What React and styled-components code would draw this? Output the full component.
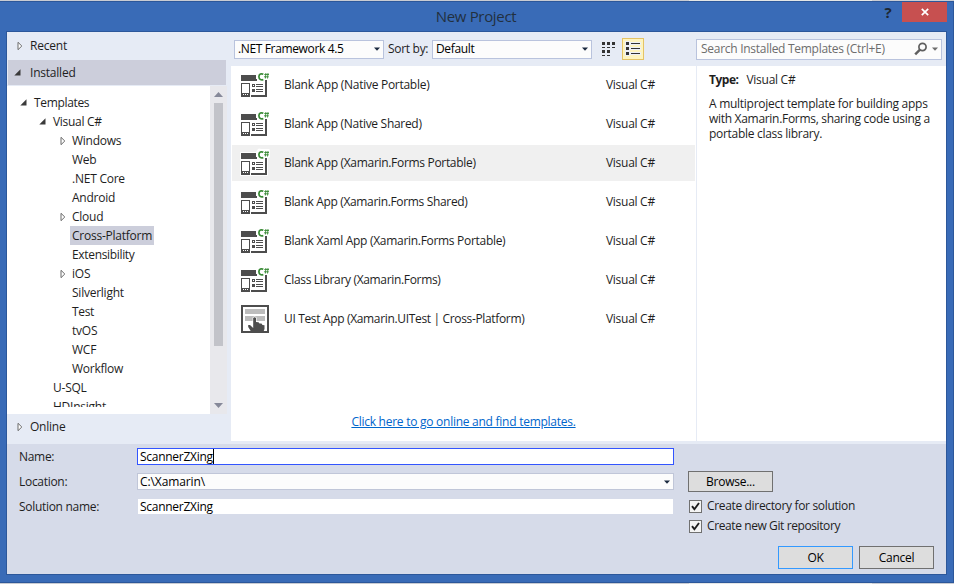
import React from 'react';
import styled, { createGlobalStyle, css } from 'styled-components';

const GlobalStyle = createGlobalStyle`
  *, *::before, *::after { box-sizing: border-box; }
  html, body { margin: 0; padding: 0; overflow: hidden; }
  body { font-family: "Open Sans", "Noto Sans", sans-serif; font-size: 12px; line-height: 16px; color: #1e1e1e; }
`;

const Backdrop = styled.div`
  width: 954px;
  height: 584px;
  padding: 1px 0 1px;
  background: linear-gradient(90deg, #c9ccd3 0 689px, #e4e6e6 689px 872px, #c9ccd3 872px);
  overflow: hidden;
`;

const Dialog = styled.div`
  height: 582px;
  background: #396bb7;
  border: 1px solid #2c579a;
  border-left: 0;
  padding: 0 6px 7px 6px;
  display: flex;
  flex-direction: column;
`;

const TitleBar = styled.header`
  height: 29px;
  display: flex;
  align-items: flex-start;
  color: #22303f;
`;
const Title = styled.h1`
  flex: 1;
  margin: 0;
  padding: 3px 0 0 72px;
  text-align: center;
  font-size: 15px;
  line-height: 22px;
  font-weight: 400;
  letter-spacing: -0.33px;
`;
const HelpButton = styled.span`
  width: 28px;
  line-height: 20px;
  font-size: 15px;
  font-weight: 700;
  text-align: center;
  color: #1d2733;
`;
const CloseButton = styled.button`
  width: 45px;
  height: 20px;
  border: 0;
  padding: 0;
  background: #c75050;
  display: flex;
  align-items: center;
  justify-content: center;
`;

const Client = styled.main`
  flex: 1;
  border: 1px solid #2c579a;
  display: flex;
  flex-direction: column;
  background: #d6dbe9;
`;
const Upper = styled.section`
  height: 412px;
  display: flex;
  background: #e6ebf5;
`;

const Sidebar = styled.nav`
  width: 224px;
  display: flex;
  flex-direction: column;
`;
const Group = styled.div`
  display: flex;
  align-items: center;
  height: ${(p) => p.$h}px;
  margin: 0 5px 0 1px;
  padding-left: ${(p) => (p.$open ? 6 : 9)}px;
  background: ${(p) => (p.$open ? '#cccedb' : 'transparent')};
  letter-spacing: -0.22px;
  > svg { margin-right: ${(p) => (p.$open ? 9 : 7)}px; }
`;
const TreePane = styled.div`
  height: 328px;
  margin-top: 1px;
  display: flex;
`;
const Tree = styled.div`
  width: 203px;
  height: 321px;
  padding-top: 7px;
  overflow: hidden;
  background: #fff;
  box-shadow: 0 7px 0 #fff;
`;
const TreeItem = styled.div`
  height: 19px;
  display: flex;
  align-items: center;
  padding-left: ${(p) => 11 + p.$level * 19}px;
`;
const Twisty = styled.span`
  width: 14px;
  height: 10px;
  padding-left: ${(p) => (p.$state === 'open' ? 2 : 4)}px;
  display: flex;
  align-items: center;
`;
const TreeLabel = styled.span`
  height: 19px;
  padding: 0 2px;
  line-height: 19px;
  white-space: nowrap;
  letter-spacing: ${(p) => p.$ls}px;
  background: ${(p) => (p.$selected ? '#cccedb' : 'transparent')};
`;
const ScrollBar = styled.div`
  width: 17px;
  background: #e8e8ec;
  display: flex;
  flex-direction: column;
  align-items: center;
`;
const ScrollArrow = styled.span`
  height: 17px;
  display: flex;
  align-items: center;
`;
const Track = styled.div`
  flex: 1;
  width: 9px;
`;
const Thumb = styled.div`
  height: 243px;
  background: #c2c3c9;
`;

const Workspace = styled.div`
  flex: 1;
  display: flex;
  flex-direction: column;
`;
const Toolbar = styled.div`
  height: 34px;
  padding: 0 4px 0 3px;
  display: flex;
  align-items: center;
`;
const Select = styled.div`
  width: ${(p) => p.$w}px;
  height: 19px;
  padding: 0 3px 0 3px;
  border: 1px solid #b9c3dd;
  background: #fcfcfc;
  display: flex;
  align-items: center;
  justify-content: space-between;
  letter-spacing: ${(p) => p.$ls}px;
  color: #000;
`;
const SortLabel = styled.span`
  width: 48px;
  padding-left: 4px;
  letter-spacing: -0.3px;
  white-space: nowrap;
`;
const ViewButton = styled.button`
  width: 22px;
  height: 22px;
  padding: 0;
  margin-left: ${(p) => (p.$active ? 3 : 5)}px;
  border: 1px solid ${(p) => (p.$active ? '#e5c365' : 'transparent')};
  background: ${(p) => (p.$active ? '#fdf4bf' : 'transparent')};
`;
const SearchBox = styled.div`
  width: 246px;
  height: 21px;
  margin-left: auto;
  padding: 0 3px 0 4px;
  border: 1px solid #b9c3dd;
  background: #fcfcfc;
  display: flex;
  align-items: center;
  gap: 4px;
  color: #6d6d6d;
`;
const Placeholder = styled.span`
  flex: 1;
  letter-spacing: -0.28px;
  white-space: nowrap;
`;

const Panes = styled.div`
  height: 375px;
  display: flex;
  background: #fff;
`;
const TemplatePane = styled.div`
  width: 465px;
  padding: 1px 1px 0;
  display: flex;
  flex-direction: column;
`;
const TemplateRow = styled.div`
  height: 36px;
  margin-bottom: 3px;
  display: grid;
  grid-template-columns: 52px 322px 1fr;
  align-items: center;
  white-space: nowrap;
  background: ${(p) => (p.$selected ? '#f0f0f0' : 'transparent')};
`;
const IconCell = styled.span`
  height: 36px;
  padding: 3px 0 0 8px;
`;
const RowText = styled.span`
  letter-spacing: ${(p) => p.$ls}px;
`;
const OnlineLink = styled.a`
  margin: 74px 0 0;
  text-align: center;
  color: #0066cc;
  text-decoration: underline;
  letter-spacing: -0.26px;
`;
const Details = styled.aside`
  flex: 1;
  border-left: 1px solid #e6ebf5;
  padding: 6px 0 0 12px;
`;
const TypeLine = styled.div`
  display: flex;
  gap: 8px;
  letter-spacing: -0.28px;
  b { letter-spacing: -0.48px; }
`;
const DescLine = styled.div`
  line-height: 15px;
  white-space: nowrap;
  letter-spacing: ${(p) => p.$ls}px;
`;
const Description = styled.div`
  margin-top: 8px;
`;

const Form = styled.section`
  flex: 1;
  display: grid;
  grid-template-columns: 667px 1fr;
`;
const Fields = styled.div`
  padding: 0 0 0 12px;
`;
const FieldRow = styled.label`
  height: 25px;
  display: grid;
  grid-template-columns: 118px 537px;
  align-items: center;
  letter-spacing: -0.3px;
`;
const inputBox = css`
  height: 17px;
  border: 1px solid ${(p) => (p.$focused ? '#3355ff' : '#d6dbe9')};
  background: #fff;
  padding: 0 2px;
  display: flex;
  align-items: center;
  color: #000;
`;
const Input = styled.div`
  ${inputBox}
  letter-spacing: -0.28px;
`;
const ComboInput = styled.div`
  ${inputBox}
  border-color: #c0c6d8;
  background: #fcfcfc;
  padding-right: 3px;
  justify-content: space-between;
  letter-spacing: -0.1px;
`;
const Caret = styled.span`
  width: 1px;
  height: 15px;
  background: #000;
`;
const Actions = styled.div`
  padding: 27px 12px 0 14px;
  display: flex;
  flex-direction: column;
`;
const Button = styled.button`
  width: ${(p) => p.$w}px;
  height: ${(p) => p.$h}px;
  padding: 0;
  border: 1px solid ${(p) => (p.$primary ? '#3399ff' : '#707070')};
  background: #dddddd;
  color: #000;
  font: inherit;
  letter-spacing: -0.25px;
`;
const CheckRow = styled.label`
  height: 20px;
  padding-left: 1px;
  display: flex;
  align-items: center;
  gap: 5px;
  white-space: nowrap;
  letter-spacing: ${(p) => p.$ls}px;
`;
const CheckBox = styled.span`
  width: 13px;
  height: 13px;
  border: 1px solid #707070;
  background: #f4f4f4;
  display: flex;
`;
const Checks = styled.div`
  margin-top: 4px;
`;
const Footer = styled.div`
  margin-top: 10px;
  display: flex;
  justify-content: flex-end;
  gap: 6px;
`;

const Closed = () => (
  <svg width="6" height="10" viewBox="0 0 6 10"><path d="M1 1.3L4.8 5L1 8.7Z" fill="#fff" stroke="#6a6a6a" /></svg>
);
const Opened = () => (
  <svg width="7" height="7" viewBox="0 0 7 7"><path d="M6.5 .3V6.5H.3Z" fill="#3a3a3a" /></svg>
);
const Drop = ({ color = '#1b293e' }) => (
  <svg width="6" height="4" viewBox="0 0 6 4"><path d="M0 .5H6L3 3.7Z" fill={color} /></svg>
);
const ScrollTriangle = ({ down }) => (
  <svg width="9" height="5" viewBox="0 0 9 5"><path d={down ? 'M0 0H9L4.5 5Z' : 'M0 5H9L4.5 0Z'} fill="#868999" /></svg>
);

const AppIcon = ({ halo }) => (
  <svg width="30" height="28" viewBox="0 0 30 28">
    {halo && <path d="M1 4H16L18 1Q19 0 21 1H29Q30.500 2 30 4V9L28 10.500V27Q28 28 27 28H1Q0 28 0 27V5Q0 4 1 4Z" fill="#fff" />}
    <g shapeRendering="crispEdges">
      <path d="M1 5H16V9H17V11H1Z" fill="#4d4d4d" />
      <path d="M25 10H27V27H11V25H25Z" fill="#4d4d4d" />
      <path d="M1 13H10V27H1Z" fill="#4d4d4d" />
      <path d="M2 14H9V23H2Z" fill="#fff" />
      <path d="M3 24H4V25H3ZM5 24H6V25H5ZM7 24H8V25H7Z" fill="#fff" />
      <path d="M12 14H15V17H12ZM12 19H15V22H12ZM16 14H23V15H16ZM16 16H23V17H16ZM16 19H23V20H16ZM16 21H23V22H16Z" fill="#4d4d4d" />
      <path d="M13 15H14V16H13Z" fill="#fff" />
    </g>
    <path d="M23.300 4.200C21.400 3.200 18.900 4.100 18.900 6.800S21.400 10.400 23.300 9.400" fill="none" stroke="#388a34" strokeWidth="1.7" />
    <path d="M24.300 4.500H29M24 6.800H28.700M25.900 3L25.400 8.500M28 3L27.500 8.500" fill="none" stroke="#388a34" strokeWidth=".9" />
  </svg>
);

const TestIcon = () => (
  <svg width="30" height="30" viewBox="0 0 30 30">
    <path d="M1 1H29V29H1Z" fill="#4d4d4d" />
    <path d="M3 3H27V27H3Z" fill="#fff" />
    <path d="M5 5H25V10H5ZM5 12H25V17H5Z" fill="#bdbdbd" />
    <path d="M11 27.500L8.200 23V21H10L13.200 24V14Q14.600 12.400 16 14V18L18.500 18.200L19.500 19.500L21.500 19.500L22.500 21L24.500 21.300V25L23.500 27.500Z" fill="#4d4d4d" stroke="#fff" strokeWidth="1.200" paintOrder="stroke" />
    <path d="M9 27H26V29H9Z" fill="#4d4d4d" />
  </svg>
);

const SmallIcons = () => (
  <svg width="20" height="20" viewBox="0 0 20 20" shapeRendering="crispEdges">
    <path d="M4 3H7V6H4ZM9 3H12V6H9ZM14 3H17V6H14ZM4 8H7V9H4ZM9 8H12V9H9ZM14 8H17V9H14ZM4 11H7V14H4ZM9 11H12V14H9ZM4 16H7V17H4ZM9 16H12V17H9Z" fill="#333" />
  </svg>
);
const ListIcon = () => (
  <svg width="20" height="20" viewBox="0 0 20 20" shapeRendering="crispEdges">
    <path d="M2 2H7V17H2ZM7 3H18V6H7ZM7 8H18V11H7ZM7 13H18V16H7Z" fill="#edf0f7" />
    <path d="M3 3H6V6H3ZM3 8H6V11H3ZM3 13H6V16H3ZM8 4H17V5H8ZM8 9H17V10H8ZM8 14H17V15H8Z" fill="#333" />
  </svg>
);
const SearchIcon = () => (
  <svg width="14" height="14" viewBox="0 0 14 14" fill="none" stroke="#5f5f5f">
    <circle cx="8.5" cy="5" r="3.6" strokeWidth="1.7" /><path d="M6 7.600L1.200 12.400" strokeWidth="2.4" />
  </svg>
);
const CheckMark = () => (
  <svg width="11" height="11" viewBox="0 0 11 11"><path d="M2 5.200L4.400 8.200L9 2" fill="none" stroke="#1e1e1e" strokeWidth="1.9" /></svg>
);
const CloseIcon = () => (
  <svg width="8" height="8" viewBox="0 0 8 8"><path d="M.8 .8L7.200 7.200M7.200 .8L.8 7.200" stroke="#fff" strokeWidth="1.7" /></svg>
);

const tree = [
  ['Templates', 0, 'open', -0.33], ['Visual C#', 1, 'open', -0.3], ['Windows', 2, 'closed', -0.25],
  ['Web', 2], ['.NET Core', 2], ['Android', 2], ['Cloud', 2, 'closed'], ['Cross-Platform', 2],
  ['Extensibility', 2, null, -0.33], ['iOS', 2, 'closed'], ['Silverlight', 2], ['Test', 2, null, -0.35], ['tvOS', 2],
  ['WCF', 2], ['Workflow', 2, null, -0.26], ['U-SQL', 1], ['HDInsight', 1],
];

const templates = [
  ['Blank App (Native Portable)', -0.28],
  ['Blank App (Native Shared)', -0.3],
  ['Blank App (Xamarin.Forms Portable)', -0.31],
  ['Blank App (Xamarin.Forms Shared)', -0.34],
  ['Blank Xaml App (Xamarin.Forms Portable)', -0.3],
  ['Class Library (Xamarin.Forms)', -0.33],
  ['UI Test App (Xamarin.UITest | Cross-Platform)', -0.34],
];

export default function App() {
  return (
    <>
      <GlobalStyle />
      <Backdrop>
        <Dialog>
          <TitleBar>
            <Title>New Project</Title>
            <HelpButton>?</HelpButton>
            <CloseButton aria-label="Close"><CloseIcon /></CloseButton>
          </TitleBar>
          <Client>
            <Upper>
              <Sidebar>
                <Group $h={28}><Closed />Recent</Group>
                <Group $h={25} $open><Opened />Installed</Group>
                <TreePane>
                  <Tree>
                    {tree.map(([name, level, state, ls = -0.24]) => (
                      <TreeItem key={name} $level={level}>
                        <Twisty $state={state}>{state === 'open' ? <Opened /> : state === 'closed' ? <Closed /> : null}</Twisty>
                        <TreeLabel $ls={ls} $selected={name === 'Cross-Platform'}>{name}</TreeLabel>
                      </TreeItem>
                    ))}
                  </Tree>
                  <ScrollBar>
                    <ScrollArrow><ScrollTriangle /></ScrollArrow>
                    <Track><Thumb /></Track>
                    <ScrollArrow><ScrollTriangle down /></ScrollArrow>
                  </ScrollBar>
                </TreePane>
                <Group $h={26}><Closed />Online</Group>
              </Sidebar>
              <Workspace>
                <Toolbar>
                  <Select $w={150} $ls={-0.36}>.NET Framework 4.5<Drop /></Select>
                  <SortLabel>Sort by:</SortLabel>
                  <Select $w={160} $ls={-0.35}>Default<Drop /></Select>
                  <ViewButton aria-label="Small icons"><SmallIcons /></ViewButton>
                  <ViewButton aria-label="List" $active><ListIcon /></ViewButton>
                  <SearchBox>
                    <Placeholder>Search Installed Templates (Ctrl+E)</Placeholder>
                    <SearchIcon />
                    <Drop color="#6d6d6d" />
                  </SearchBox>
                </Toolbar>
                <Panes>
                  <TemplatePane>
                    {templates.map(([name, ls], i) => (
                      <TemplateRow key={name} $selected={i === 2}>
                        <IconCell>{i === 6 ? <TestIcon /> : <AppIcon halo={i === 2} />}</IconCell>
                        <RowText $ls={ls}>{name}</RowText>
                        <RowText $ls={-0.28}>Visual C#</RowText>
                      </TemplateRow>
                    ))}
                    <OnlineLink>Click here to go online and find templates.</OnlineLink>
                  </TemplatePane>
                  <Details>
                    <TypeLine><b>Type:</b><span>Visual C#</span></TypeLine>
                    <Description>
                      <DescLine $ls={-0.27}>A multiproject template for building apps</DescLine>
                      <DescLine $ls={-0.3}>with Xamarin.Forms, sharing code using a</DescLine>
                      <DescLine $ls={-0.29}>portable class library.</DescLine>
                    </Description>
                  </Details>
                </Panes>
              </Workspace>
            </Upper>
            <Form>
              <Fields>
                <FieldRow><span>Name:</span><Input $focused>ScannerZXing<Caret /></Input></FieldRow>
                <FieldRow><span>Location:</span><ComboInput>C:\Xamarin\<Drop /></ComboInput></FieldRow>
                <FieldRow><span>Solution name:</span><Input>ScannerZXing</Input></FieldRow>
              </Fields>
              <Actions>
                <Button $w={85} $h={21}>Browse...</Button>
                <Checks>
                  <CheckRow $ls={-0.34}><CheckBox><CheckMark /></CheckBox>Create directory for solution</CheckRow>
                  <CheckRow $ls={-0.4}><CheckBox><CheckMark /></CheckBox>Create new Git repository</CheckRow>
                </Checks>
                <Footer>
                  <Button $w={75} $h={23} $primary>OK</Button>
                  <Button $w={75} $h={23}>Cancel</Button>
                </Footer>
              </Actions>
            </Form>
          </Client>
        </Dialog>
      </Backdrop>
    </>
  );
}
